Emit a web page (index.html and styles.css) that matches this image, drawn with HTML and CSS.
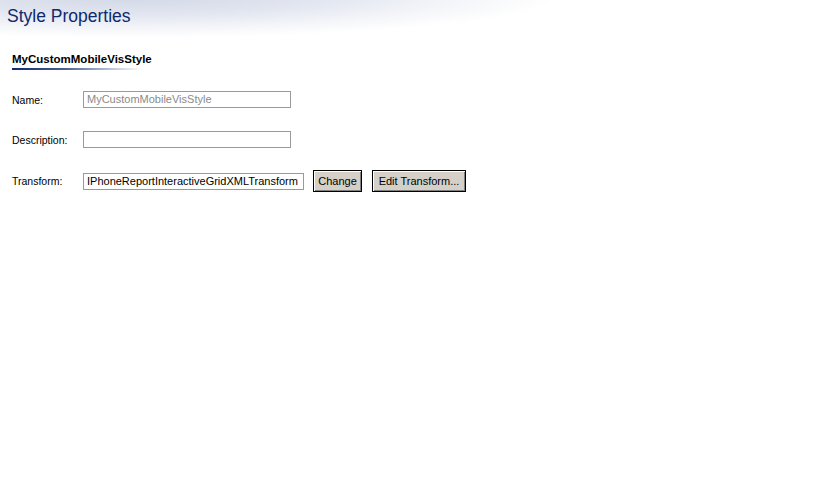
FILE: index.html
```html
<!DOCTYPE html>
<html>
<head>
<meta charset="utf-8">
<link rel="stylesheet" href="styles.css">
</head>
<body>
<div class="header"><h1 class="title">Style Properties</h1></div>
<div class="content">
  <div class="section-title">MyCustomMobileVisStyle</div>
  <div class="underline"></div>
  <div class="form">
    <div class="row row-name">
      <label class="label">Name:</label>
      <div class="input input-wide disabled">MyCustomMobileVisStyle</div>
    </div>
    <div class="row row-desc">
      <label class="label">Description:</label>
      <div class="input input-wide"></div>
    </div>
    <div class="row row-transform">
      <label class="label">Transform:</label>
      <div class="input input-transform">IPhoneReportInteractiveGridXMLTransform</div>
      <button class="btn btn-change">Change</button>
      <button class="btn btn-edit">Edit Transform...</button>
    </div>
  </div>
</div>
</body>
</html>
```
FILE: styles.css
```css
html, body {
  margin: 0;
  padding: 0;
  background: #ffffff;
  font-family: "Liberation Sans", Arial, sans-serif;
}
.header {
  height: 36px;
  background: radial-gradient(ellipse 430px 42px at 130px -4px, #d1d7e6 0%, #e2e6f0 45%, #f6f7fa 80%, #ffffff 100%);
}
.title {
  margin: 0;
  padding: 6px 0 0 7px;
  font-size: 17.5px;
  font-weight: normal;
  color: #0d2a6e;
  line-height: 20px;
}
.content {
  padding: 16px 0 0 12px;
}
.section-title {
  font-size: 11.5px;
  font-weight: bold;
  color: #000;
  line-height: 14px;
}
.underline {
  margin-top: 2px;
  width: 131px;
  height: 2px;
  background: linear-gradient(to right, #0f2a6e 0%, #4a5f92 40%, #b9c2d8 75%, #ffffff 100%);
}
.form {
  padding-top: 21px;
}
.row {
  display: flex;
  align-items: center;
}
.row-desc { margin-top: 23px; }
.row-transform { margin-top: 22px; }
.label {
  width: 71px;
  font-size: 10.5px;
  color: #000;
}
.input {
  box-sizing: border-box;
  height: 17px;
  border: 1px solid #9a9a9a;
  font-size: 11px;
  line-height: 15px;
  padding-left: 3px;
  color: #000;
  white-space: nowrap;
  overflow: hidden;
}
.input-wide { width: 208px; }
.input-transform { width: 221px; }
.disabled { color: #8a8a8a; }
.btn {
  box-sizing: border-box;
  height: 22px;
  border: 1px solid #000;
  box-shadow: inset 1px 1px 0 #ffffff, inset -1px -1px 0 #808080;
  background: #d4d0c8;
  font-family: "Liberation Sans", Arial, sans-serif;
  font-size: 11px;
  color: #000;
  padding: 0;
  margin-left: 9px;
}
.btn-change { width: 49px; }
.btn-edit { width: 94px; margin-left: 10px; }
```
